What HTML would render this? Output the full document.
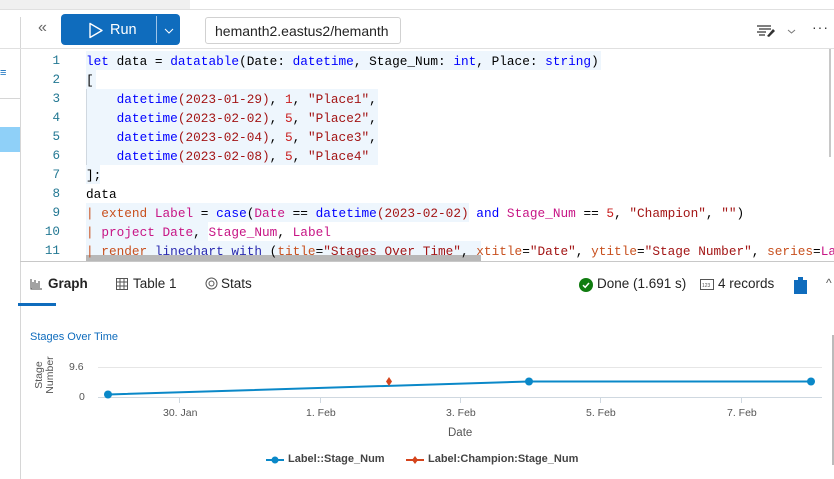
<!DOCTYPE html>
<html><head><meta charset="utf-8"><style>
*{margin:0;padding:0;box-sizing:border-box}
body{width:834px;height:479px;overflow:hidden;background:#fff;font-family:"Liberation Sans",sans-serif;position:relative;color:#242424}
.abs{position:absolute}
.code{position:absolute;left:86px;font-family:"Liberation Mono",monospace;font-size:12.75px;height:19px;line-height:19px;white-space:pre;color:#000;top:1px}
.ln{position:absolute;left:30px;width:30px;text-align:right;font-family:"Liberation Mono",monospace;font-size:12.6px;line-height:19px;color:#237893;margin-top:1px}
.k{color:#0000ff}.s{color:#a31515}.n{color:#c81e1e}.o{color:#c8501e}.p{color:#c71585}.b{color:#2a2ab0}
.bg{position:absolute;background:#eef6fd}
.tab{position:absolute;top:276px;font-size:13.5px;color:#242424}
.ax{position:absolute;font-size:10.5px;color:#555;font-family:"Liberation Sans",sans-serif}
</style></head><body>
<div class="abs" style="left:0;top:0;width:190px;height:9px;background:#f0f0f0"></div>
<div class="abs" style="left:0;top:9px;width:834px;height:1px;background:#e0e0e0"></div>
<div class="abs" style="left:20px;top:17px;width:1px;height:462px;background:#d6d6d6"></div>
<div class="abs" style="left:0;top:48px;width:834px;height:1px;background:#e0e0e0"></div>
<div class="abs" style="left:0;top:67px;font-size:11px;color:#0f6cbd">≡</div>
<div class="abs" style="left:0;top:98px;width:20px;height:1px;background:#d6d6d6"></div>
<div class="abs" style="left:0;top:127px;width:20px;height:25px;background:#8fd0f8"></div>
<div class="abs" style="left:38px;top:19px;font-size:16px;color:#666">«</div>
<div class="abs" style="left:61px;top:14px;width:119px;height:31px;background:#0f6cbd;border-radius:4px"></div>
<div class="abs" style="left:156px;top:16px;width:1px;height:27px;background:#9ec4e8"></div>
<svg class="abs" style="left:88px;top:22px" width="16" height="17" viewBox="0 0 16 17"><path d="M2 1.5 L14 8.5 L2 15.5 Z" fill="none" stroke="#fff" stroke-width="1.4" stroke-linejoin="round"/></svg>
<div class="abs" style="left:110px;top:22px;font-size:14.5px;color:#fff">Run</div>
<svg class="abs" style="left:164px;top:28px" width="10" height="6"><path d="M1 1 L5 5 L9 1" fill="none" stroke="#fff" stroke-width="1"/></svg>
<div class="abs" style="left:205px;top:17px;width:196px;height:27px;border:1px solid #d1d1d1;border-radius:3px;font-size:14px;line-height:26px;padding-left:9px;color:#242424">hemanth2.eastus2/hemanth</div>
<svg class="abs" style="left:756px;top:24px" width="20" height="14"><path d="M1 2h14M3 5h12M1 8h9M3 11h6" stroke="#333" stroke-width="1.2"/><path d="M11 12 L17 5 L19 7 L13 13 Z" fill="#333"/></svg>
<svg class="abs" style="left:787px;top:29px" width="9" height="5"><path d="M1 1 L4.5 4 L8 1" fill="none" stroke="#777" stroke-width="1"/></svg>
<div class="abs" style="left:812px;top:19px;font-size:14px;color:#333;letter-spacing:1px">···</div>
<div class="abs" style="left:829px;top:49px;width:2px;height:108px;background:#c8c8c8"></div>
<div class="bg" style="left:86px;top:51px;width:515px;height:19px"></div>
<div class="bg" style="left:86px;top:70px;width:10px;height:19px"></div>
<div class="bg" style="left:86px;top:89px;width:292px;height:76px;border-left:1px solid #d0d8e0"></div>
<div class="bg" style="left:86px;top:165px;width:14px;height:19px"></div>
<div class="bg" style="left:86px;top:203px;width:383px;height:19px"></div>
<div class="bg" style="left:86px;top:222px;width:122px;height:19px"></div>
<div class="bg" style="left:86px;top:241px;width:395px;height:15px"></div>
<div class="abs" style="left:86px;top:255px;width:395px;height:6px;background:#b8b8b8"></div>

<div class="ln" style="top:51px">1</div><div class="code" style="top:52px"><span class="k">let</span> data = <span class="k">datatable</span>(Date: <span class="k">datetime</span>, Stage_Num: <span class="k">int</span>, Place: <span class="k">string</span>)</div>
<div class="ln" style="top:70px">2</div><div class="code" style="top:71px">[</div>
<div class="ln" style="top:89px">3</div><div class="code" style="top:90px">    <span class="k">datetime</span><span class="s">(2023-01-29)</span>, <span class="n">1</span>, <span class="s">"Place1"</span>,</div>
<div class="ln" style="top:108px">4</div><div class="code" style="top:109px">    <span class="k">datetime</span><span class="s">(2023-02-02)</span>, <span class="n">5</span>, <span class="s">"Place2"</span>,</div>
<div class="ln" style="top:127px">5</div><div class="code" style="top:128px">    <span class="k">datetime</span><span class="s">(2023-02-04)</span>, <span class="n">5</span>, <span class="s">"Place3"</span>,</div>
<div class="ln" style="top:146px">6</div><div class="code" style="top:147px">    <span class="k">datetime</span><span class="s">(2023-02-08)</span>, <span class="n">5</span>, <span class="s">"Place4"</span></div>
<div class="ln" style="top:165px">7</div><div class="code" style="top:166px">];</div>
<div class="ln" style="top:184px">8</div><div class="code" style="top:185px">data</div>
<div class="ln" style="top:203px">9</div><div class="code" style="top:204px"><span class="o">| extend</span> <span class="p">Label</span> = <span class="k">case</span>(<span class="p">Date</span> == <span class="k">datetime</span><span class="s">(2023-02-02)</span> <span class="k">and</span> <span class="p">Stage_Num</span> == <span class="n">5</span>, <span class="s">"Champion"</span>, <span class="s">""</span>)</div>
<div class="ln" style="top:222px">10</div><div class="code" style="top:223px"><span class="o">|</span> <span class="p">project</span> <span class="p">Date</span>, <span class="p">Stage_Num</span>, <span class="p">Label</span></div>
<div class="abs" style="left:0;top:241px;width:834px;height:20px;overflow:hidden">
<div class="ln" style="top:0">11</div><div class="code" style="top:1px"><span class="o">| render</span> <span class="b">linechart with</span> (<span class="o">title</span>=<span class="s">"Stages Over Time"</span>, <span class="o">xtitle</span>=<span class="s">"Date"</span>, <span class="o">ytitle</span>=<span class="s">"Stage Number"</span>, <span class="o">series</span>=<span class="p">La</span></div>
</div>
<div class="abs" style="left:20px;top:261px;width:814px;height:1px;background:#c8c8c8"></div>
<svg class="abs" style="left:30px;top:278px" width="13" height="12"><path d="M1 1v10h11M3 4v6M5 2v8M7 5v5M9 3v7" stroke="#444" stroke-width="1" fill="none"/></svg>
<div class="tab" style="left:48px;font-weight:bold;color:#242424">Graph</div>
<div class="abs" style="left:18px;top:303px;width:38px;height:3px;background:#0f6cbd"></div>
<svg class="abs" style="left:116px;top:278px" width="12" height="12"><rect x="0.5" y="0.5" width="11" height="11" fill="none" stroke="#555"/><path d="M0 4h12M0 8h12M4 0v12M8 0v12" stroke="#555"/></svg>
<div class="tab" style="left:133px">Table 1</div>
<svg class="abs" style="left:205px;top:277px" width="13" height="13"><circle cx="6.5" cy="6.5" r="5.5" fill="none" stroke="#555"/><circle cx="6.5" cy="6.5" r="2.5" fill="none" stroke="#555"/></svg>
<div class="tab" style="left:221px">Stats</div>
<svg class="abs" style="left:579px;top:278px" width="14" height="14"><circle cx="7" cy="7" r="7" fill="#107c10"/><path d="M4 7.2 L6.2 9.3 L10 5" stroke="#fff" stroke-width="1.5" fill="none"/></svg>
<div class="tab" style="left:597px">Done (1.691 s)</div>
<svg class="abs" style="left:700px;top:279px" width="14" height="11"><rect x="0.5" y="0.5" width="13" height="10" fill="none" stroke="#555"/><text x="2" y="8" font-size="5" fill="#555" font-family="Liberation Sans">123</text></svg>
<div class="tab" style="left:718px">4 records</div>
<svg class="abs" style="left:794px;top:277px" width="13" height="17"><rect x="0" y="3" width="13" height="14" fill="#0f6cbd"/><rect x="4" y="0" width="5" height="5" fill="#0f6cbd"/></svg>
<div class="abs" style="left:826px;top:276px;font-size:12px;color:#555">^</div>
<div class="abs" style="left:832px;top:335px;width:2px;height:130px;background:#bbb"></div>
<div class="abs" style="left:30px;top:331px;font-size:11px;color:#0f6cbd">Stages Over Time</div>
<div class="abs" style="left:34px;top:395px;transform:rotate(-90deg);transform-origin:0 0;font-size:10.5px;color:#555;line-height:11px;text-align:center;width:40px">Stage<br>Number</div>
<div class="ax" style="left:69px;top:361px">9.6</div>
<div class="ax" style="left:79px;top:391px">0</div>
<svg class="abs" style="left:0;top:0" width="834" height="479">
<line x1="98" y1="367.5" x2="822" y2="367.5" stroke="#e6e6e6"/>
<line x1="98" y1="397.5" x2="822" y2="397.5" stroke="#cfd8e0"/>
<g stroke="#cfd8e0"><line x1="179.5" y1="397" x2="179.5" y2="403"/><line x1="320.5" y1="397" x2="320.5" y2="403"/><line x1="460.5" y1="397" x2="460.5" y2="403"/><line x1="600.5" y1="397" x2="600.5" y2="403"/><line x1="741.5" y1="397" x2="741.5" y2="403"/></g>
<polyline points="108,394.5 529,381.5 811,381.5" fill="none" stroke="#0a88c8" stroke-width="2"/>
<g fill="#0a88c8"><circle cx="108" cy="394.5" r="4"/><circle cx="529" cy="381.5" r="4"/><circle cx="811" cy="381.5" r="4"/></g>
<path d="M389 377 L392 381.5 L389 386 L386 381.5 Z" fill="#d5441c"/>
<line x1="266" y1="460" x2="284" y2="460" stroke="#0a88c8" stroke-width="2"/><circle cx="275" cy="460" r="3.5" fill="#0a88c8"/>
<line x1="406" y1="460" x2="424" y2="460" stroke="#d5441c" stroke-width="2"/><path d="M415 456 L418 460 L415 464 L412 460 Z" fill="#d5441c"/>
</svg>
<div class="ax" style="left:163px;top:407px">30. Jan</div>
<div class="ax" style="left:306px;top:407px">1. Feb</div>
<div class="ax" style="left:446px;top:407px">3. Feb</div>
<div class="ax" style="left:586px;top:407px">5. Feb</div>
<div class="ax" style="left:727px;top:407px">7. Feb</div>
<div class="ax" style="left:448px;top:427px;font-size:11.5px">Date</div>
<div class="abs" style="left:288px;top:453px;font-size:11px;font-weight:bold;color:#444">Label::Stage_Num</div>
<div class="abs" style="left:428px;top:453px;font-size:11px;font-weight:bold;color:#444">Label:Champion:Stage_Num</div>
</body></html>
